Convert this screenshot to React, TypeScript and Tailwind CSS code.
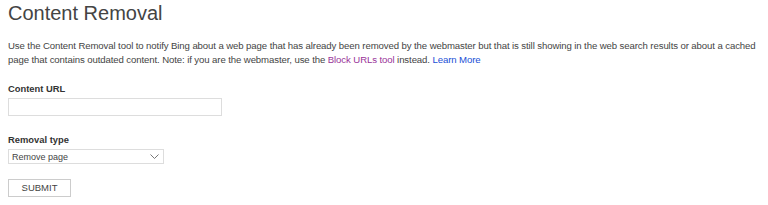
export default function App() {
  return (
    <div className="w-[768px] h-[205px] bg-white pl-2 pr-[6px] pt-[1px] text-[#444] overflow-hidden" style={{ fontFamily: '"Liberation Sans", Arial, sans-serif' }}>
      <h1 className="text-[20px] leading-[24px] text-[#444]">Content Removal</h1>
      <p className="mt-[14px] text-[9.6px] leading-[14px] tracking-[-0.1px] text-[#444]">
        Use the Content Removal tool to notify Bing about a web page that has already been removed by the webmaster but that is still showing in the web search results or about a cached page that contains outdated content. Note: if you are the webmaster, use the{' '}
        <a className="text-[#993399]">Block URLs tool</a> instead. <a className="text-[#1a4fd6]">Learn More</a>
      </p>
      <div className="mt-[15px] text-[9.4px] font-bold leading-[13px] text-[#333]">Content URL</div>
      <input className="mt-[3px] block h-[18px] w-[214px] border border-[#ddd] bg-white" />
      <div className="mt-[17px] text-[9.4px] font-bold leading-[13px] text-[#333]">Removal type</div>
      <div className="mt-[3px] flex h-[15px] w-[156px] items-center justify-between border border-[#ddd] bg-white pl-[3px] pr-[4px]">
        <span className="text-[9px] leading-[12px] text-[#444]">Remove page</span>
        <svg width="9" height="6" viewBox="0 0 9 6" fill="none"><path d="M0.5 0.5 L4.5 4.5 L8.5 0.5" stroke="#777" strokeWidth="1" /></svg>
      </div>
      <button className="mt-[15px] flex h-[18px] w-[63px] items-center justify-center border border-[#ccc] bg-white text-[9.5px] text-[#444]">SUBMIT</button>
    </div>
  );
}
